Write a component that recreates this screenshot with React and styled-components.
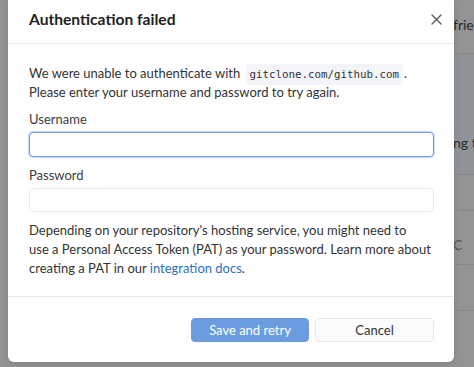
import React from "react";
import styled, { createGlobalStyle } from "styled-components";

const Global = createGlobalStyle`
  html, body { margin: 0; padding: 0; }
  body {
    width: 474px; height: 367px; overflow: hidden;
    font-family: Lato, "Open Sans", sans-serif;
    background: #939393;
  }
`;

const Stage = styled.div`
  position: relative;
  width: 474px;
  height: 367px;
  overflow: hidden;
  background: #939393;
`;

const BackApp = styled.div`
  display: flex;
  flex-direction: column;
  padding-left: 440px;
  height: 100%;
  font-size: 14px;
`;

const BackRow = styled.div`
  box-sizing: border-box;
  height: ${(p) => p.h}px;
  border-bottom: 1px solid ${(p) => (p.line ? "#878787" : "transparent")};
  background: ${(p) => p.bg || "transparent"};
  padding: ${(p) => p.ty || 0}px 0 0 13px;
  line-height: 18px;
  white-space: nowrap;
  color: ${(p) => p.c || "#2a2a2a"};
`;

const Dialog = styled.div`
  position: absolute;
  left: 8px;
  top: 0;
  width: 446px;
  height: 362px;
  background: #fff;
  border-radius: 0 0 6px 6px;
  display: flex;
  flex-direction: column;
  box-shadow: 0 2px 6px rgba(0,0,0,0.12);
`;

const Header = styled.div`
  height: 44px;
  flex: none;
  box-sizing: border-box;
  border-bottom: 1px solid #e7e8ea;
  display: flex;
  align-items: center;
  justify-content: space-between;
  padding: 0 10px 5px 21px;
`;

const Title = styled.h1`
  margin: 0;
  font-size: 15.6px;
  font-weight: 700;
  color: #222;
`;

const Close = styled.button`
  border: 0;
  background: none;
  padding: 0;
  width: 16px;
  height: 16px;
  display: flex;
  align-items: center;
  justify-content: center;
  cursor: pointer;
`;

const Body = styled.div`
  flex: 1;
  padding: 20px 20px 0 21px;
  border-bottom: 1px solid #e7e8ea;
  color: #333;
  font-size: 13px;
  line-height: 19px;
`;

const Para = styled.p`
  margin: 0;
`;

const Code = styled.code`
  font-family: "DejaVu Sans Mono", "Liberation Mono", monospace;
  font-size: 10.8px;
  line-height: 1;
  background: #f3f5f8;
  border-radius: 4px;
  padding: 4px 4px;
  margin: 0 1px 0 2px;
  color: #333;
`;

const Field = styled.div`
  display: flex;
  flex-direction: column;
  margin-top: ${(p) => p.mt}px;
`;

const Label = styled.label`
  font-size: 13px;
  color: #3c3c3c;
  line-height: 17px;
  margin-bottom: 4px;
`;

const Input = styled.input`
  box-sizing: border-box;
  height: ${(p) => (p.focused ? 25 : 24)}px;
  width: 405px;
  border: 1px solid ${(p) => (p.focused ? "#6d9be0" : "#e8eaed")};
  box-shadow: ${(p) => (p.focused ? "0 0 0 1px rgba(109,155,224,0.35)" : "none")};
  border-radius: 4px;
  outline: none;
  font: inherit;
  padding: 0 8px;
`;

const Help = styled.p`
  margin: 9px 0 0;
  white-space: nowrap;
`;

const Link = styled.a`
  color: #2c6fc3;
  text-decoration: none;
`;

const Footer = styled.div`
  height: 65px;
  flex: none;
  display: flex;
  justify-content: flex-end;
  align-items: center;
  gap: 6px;
  padding: 0 20px;
`;

const Button = styled.button`
  box-sizing: border-box;
  width: ${(p) => (p.primary ? 118 : 119)}px;
  height: 24px;
  border-radius: 4px;
  border: 1px solid ${(p) => (p.primary ? "#6b9ce0" : "#e6e8eb")};
  background: ${(p) => (p.primary ? "#6b9ce0" : "#fafbfc")};
  color: ${(p) => (p.primary ? "#fff" : "#333")};
  font: inherit;
  font-size: 13px;
`;

export default function App() {
  return (
    <Stage>
      <Global />
      <BackApp>
        <BackRow h={54} line ty={16}>frie</BackRow>
        <BackRow h={121} line bg="#8f9297" ty={80}>ng t</BackRow>
        <BackRow h={36} line />
        <BackRow h={54} line c="#555" ty={25}>C</BackRow>
        <BackRow h={46} line />
        <BackRow h={56} />
      </BackApp>
      <Dialog>
        <Header>
          <Title>Authentication failed</Title>
          <Close aria-label="Close">
            <svg width="11" height="11" viewBox="0 0 11 11">
              <path d="M1 1L10 10M10 1L1 10" stroke="#555" strokeWidth="1.3" strokeLinecap="round" />
            </svg>
          </Close>
        </Header>
        <Body>
          <Para>
            We were unable to authenticate with <Code>gitclone.com/github.com</Code>.
            <br />
            Please enter your username and password to try again.
          </Para>
          <Field mt={9}>
            <Label>Username</Label>
            <Input focused />
          </Field>
          <Field mt={10}>
            <Label>Password</Label>
            <Input type="password" />
          </Field>
          <Help>
            Depending on your repository's hosting service, you might need to
            <br />
            use a Personal Access Token (PAT) as your password. Learn more about
            <br />
            creating a PAT in our <Link href="#">integration docs</Link>.
          </Help>
        </Body>
        <Footer>
          <Button primary>Save and retry</Button>
          <Button>Cancel</Button>
        </Footer>
      </Dialog>
    </Stage>
  );
}
